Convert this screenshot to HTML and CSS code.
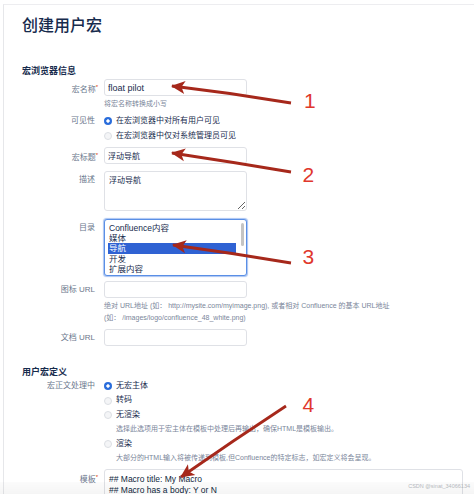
FILE: index.html
```html
<!DOCTYPE html>
<html lang="zh-CN">
<head>
<meta charset="utf-8">
<title>创建用户宏</title>
<link rel="stylesheet" href="styles.css">
</head>
<body>
<div class="page">
  <h1 class="title">创建用户宏</h1>

  <h2 class="section">宏浏览器信息</h2>

  <div class="row r-name">
    <div class="lbl">宏名称<span class="req">*</span></div>
    <div class="field">
      <input class="txt" type="text" value="float pilot">
      <div class="help">将宏名称转换成小写</div>
    </div>
  </div>

  <div class="row r-vis">
    <div class="lbl lbl-opt">可见性</div>
    <div class="field">
      <div class="opt"><span class="radio on"></span>在宏浏览器中对所有用户可见</div>
      <div class="opt"><span class="radio"></span>在宏浏览器中仅对系统管理员可见</div>
    </div>
  </div>

  <div class="row r-title">
    <div class="lbl">宏标题<span class="req">*</span></div>
    <div class="field">
      <input class="txt cjk" type="text" value="浮动导航">
    </div>
  </div>

  <div class="row r-desc">
    <div class="lbl">描述</div>
    <div class="field">
      <textarea class="area">浮动导航</textarea>
    </div>
  </div>

  <div class="row r-cat">
    <div class="lbl">目录</div>
    <div class="field">
      <div class="list">
        <div class="opts">
          <div class="o">Confluence内容</div>
          <div class="o">媒体</div>
          <div class="o sel">导航</div>
          <div class="o">开发</div>
          <div class="o">扩展内容</div>
        </div>
        <div class="sbar"><div class="thumb"></div></div>
      </div>
    </div>
  </div>

  <div class="row r-icon">
    <div class="lbl">图标 URL</div>
    <div class="field">
      <input class="txt" type="text" value="">
      <div class="help two">绝对 URL地址 (如： http://mysite.com/myimage.png), 或者相对 Confluence 的基本 URL地址<br>(如： /images/logo/confluence_48_white.png)</div>
    </div>
  </div>

  <div class="row r-doc">
    <div class="lbl">文档 URL</div>
    <div class="field">
      <input class="txt" type="text" value="">
    </div>
  </div>

  <h2 class="section second">用户宏定义</h2>

  <div class="row r-body">
    <div class="lbl lbl-body">宏正文处理中</div>
    <div class="field">
      <div class="opt b"><span class="radio on"></span>无宏主体</div>
      <div class="opt b"><span class="radio"></span>转码</div>
      <div class="opt b"><span class="radio"></span>无渲染</div>
      <div class="bhelp">选择此选项用于宏主体在模板中处理后再输出，确保HTML是模板输出。</div>
      <div class="opt b"><span class="radio"></span>渲染</div>
      <div class="bhelp">大部分的HTML输入将被传递到模板,但Confluence的特定标志，如宏定义将会呈现。</div>
    </div>
  </div>

  <div class="row r-tpl">
    <div class="lbl">模板<span class="req">*</span></div>
    <div class="field">
      <textarea class="area tpl">## Macro title: My Macro
## Macro has a body: Y or N
## Body processing: Selected body processing option
## Output: Selected output option
##
## Developed by: My Name</textarea>
    </div>
  </div>
</div>

<div class="fade"></div>
<div class="mark">CSDN @sinat_34066134</div>

<svg class="annot" width="474" height="494" viewBox="0 0 474 494" xmlns="http://www.w3.org/2000/svg">
  <defs>
    <marker id="ah" viewBox="0 0 14 14" refX="13" refY="7" markerWidth="15" markerHeight="14" markerUnits="userSpaceOnUse" orient="auto">
      <path d="M0,0.5 L14,7 L0,13.5 L3.5,7 z" fill="#a6281b"/>
    </marker>
  </defs>
  <g fill="none" stroke="#a6281b" stroke-width="2.8" stroke-linecap="butt" marker-end="url(#ah)">
    <path d="M291,103 Q232,93 172,86"/>
    <path d="M291,172 Q232,162 172,153"/>
    <path d="M291,263 Q232,253 173,245"/>
    <path d="M286,406 Q234,440 181,477"/>
  </g>
  <g class="num" fill="#e0372c">
    <text x="304" y="108">1</text>
    <text x="302.5" y="182">2</text>
    <text x="302.5" y="264">3</text>
    <text x="302.5" y="412">4</text>
  </g>
</svg>
</body>
</html>
```

FILE: styles.css
```css
html, body {
  margin: 0;
  height: 494px;
  overflow: hidden;
  background: #ffffff;
}

body {
  position: relative;
  font-family: "Liberation Sans", "Noto Sans CJK SC", sans-serif;
  color: #172b4d;
}

.page {
  margin: 4px 0 0 3px;
  border-left: 1px solid #e6e7ea;
  border-top: 1px solid #ededf0;
  padding: 11px 0 0 18px;
  height: 600px;
}

.title {
  margin: 0;
  font-size: 16px;
  line-height: 20px;
  font-weight: 500;
  color: #172b4d;
}

.section {
  margin: 28.5px 0 0;
  font-size: 9px;
  line-height: 12px;
  font-weight: 700;
  color: #172b4d;
}

.section.second {
  margin-top: 19.5px;
}

.row {
  display: grid;
  grid-template-columns: 73px auto;
  column-gap: 9px;
}

.lbl {
  text-align: right;
  font-size: 8px;
  line-height: 17px;
  color: #6b778c;
  white-space: nowrap;
}

.lbl-opt {
  line-height: 15px;
}

.lbl-body {
  line-height: 14.5px;
}

.req {
  color: #de350b;
  font-size: 6px;
  vertical-align: 3px;
  margin-right: -3px;
}

.txt {
  display: block;
  box-sizing: border-box;
  width: 143px;
  height: 17px;
  margin: 0;
  padding: 0 3px;
  border: 1px solid #dfe1e6;
  border-radius: 3px;
  background: #ffffff;
  font-family: "Liberation Sans", "Noto Sans CJK SC", sans-serif;
  font-size: 9px;
  color: #172b4d;
  outline: none;
}

.txt.cjk {
  font-size: 8px;
}

.help {
  margin-top: 3px;
  font-size: 7px;
  line-height: 10px;
  color: #7a869a;
  white-space: nowrap;
}

.help.two {
  margin-top: 2px;
  line-height: 12px;
}

.opt {
  display: flex;
  align-items: center;
  gap: 4px;
  font-size: 8px;
  line-height: 15px;
  color: #172b4d;
  white-space: nowrap;
}

.opt.b {
  line-height: 14.5px;
}

.bhelp {
  padding-left: 12px;
  font-size: 7px;
  line-height: 14.5px;
  color: #7a869a;
  white-space: nowrap;
}

.radio {
  flex: none;
  box-sizing: border-box;
  width: 8px;
  height: 8px;
  border-radius: 50%;
  border: 1px solid #dcdfe4;
  background: #f4f5f7;
}

.radio.on {
  border: none;
  background: radial-gradient(circle, #ffffff 0 1.4px, #2a6ddb 1.9px);
}

.area {
  display: block;
  box-sizing: border-box;
  width: 143px;
  height: 40px;
  margin: 0;
  padding: 3px 4px;
  border: 1px solid #dfe1e6;
  border-radius: 3px;
  background: #ffffff;
  font-family: "Liberation Sans", "Noto Sans CJK SC", sans-serif;
  font-size: 8px;
  line-height: 11px;
  color: #172b4d;
  resize: vertical;
  outline: none;
}

.area.tpl {
  width: 359px;
  height: 80px;
  padding: 3.5px 4px;
  font-size: 8.5px;
  color: #0f1f3d;
  overflow: hidden;
}

.r-name { margin-top: 2.5px; }
.r-vis { margin-top: 4px; }
.r-title { margin-top: 4px; }
.r-desc { margin-top: 5px; }
.r-cat { margin-top: 8px; }
.r-icon { margin-top: 5px; }
.r-doc { margin-top: 5px; }
.r-body { margin-top: 1.25px; }
.r-tpl { margin-top: 3.25px; }

.list {
  display: flex;
  box-sizing: border-box;
  width: 143px;
  height: 57px;
  padding: 3px 1px 3px 3px;
  border: 1px solid #5a8fe6;
  border-radius: 3px;
  box-shadow: 0 0 1px 0.5px #a9c4f2;
  background: #ffffff;
}

.opts {
  flex: 1;
}

.o {
  font-size: 8.5px;
  line-height: 10.2px;
  padding-left: 1px;
  color: #172b4d;
  white-space: nowrap;
}

.o.sel {
  background: #2f62d3;
  color: #ffffff;
}

.sbar {
  flex: none;
  width: 4px;
  margin-left: 5px;
}

.thumb {
  width: 3px;
  height: 23px;
  border-radius: 2px;
  background: #c4c4c4;
}

.fade {
  position: absolute;
  left: 0;
  right: 0;
  bottom: 0;
  height: 12px;
  background: linear-gradient(rgba(0, 0, 0, 0.015), rgba(0, 0, 0, 0.04));
}

.mark {
  position: absolute;
  right: 4px;
  bottom: 4px;
  font-size: 5.5px;
  line-height: 7px;
  color: #b5b8bd;
  white-space: nowrap;
}

.annot {
  position: absolute;
  left: 0;
  top: 0;
  pointer-events: none;
}

.num text {
  font-family: "Liberation Sans", sans-serif;
  font-size: 21px;
}
```
